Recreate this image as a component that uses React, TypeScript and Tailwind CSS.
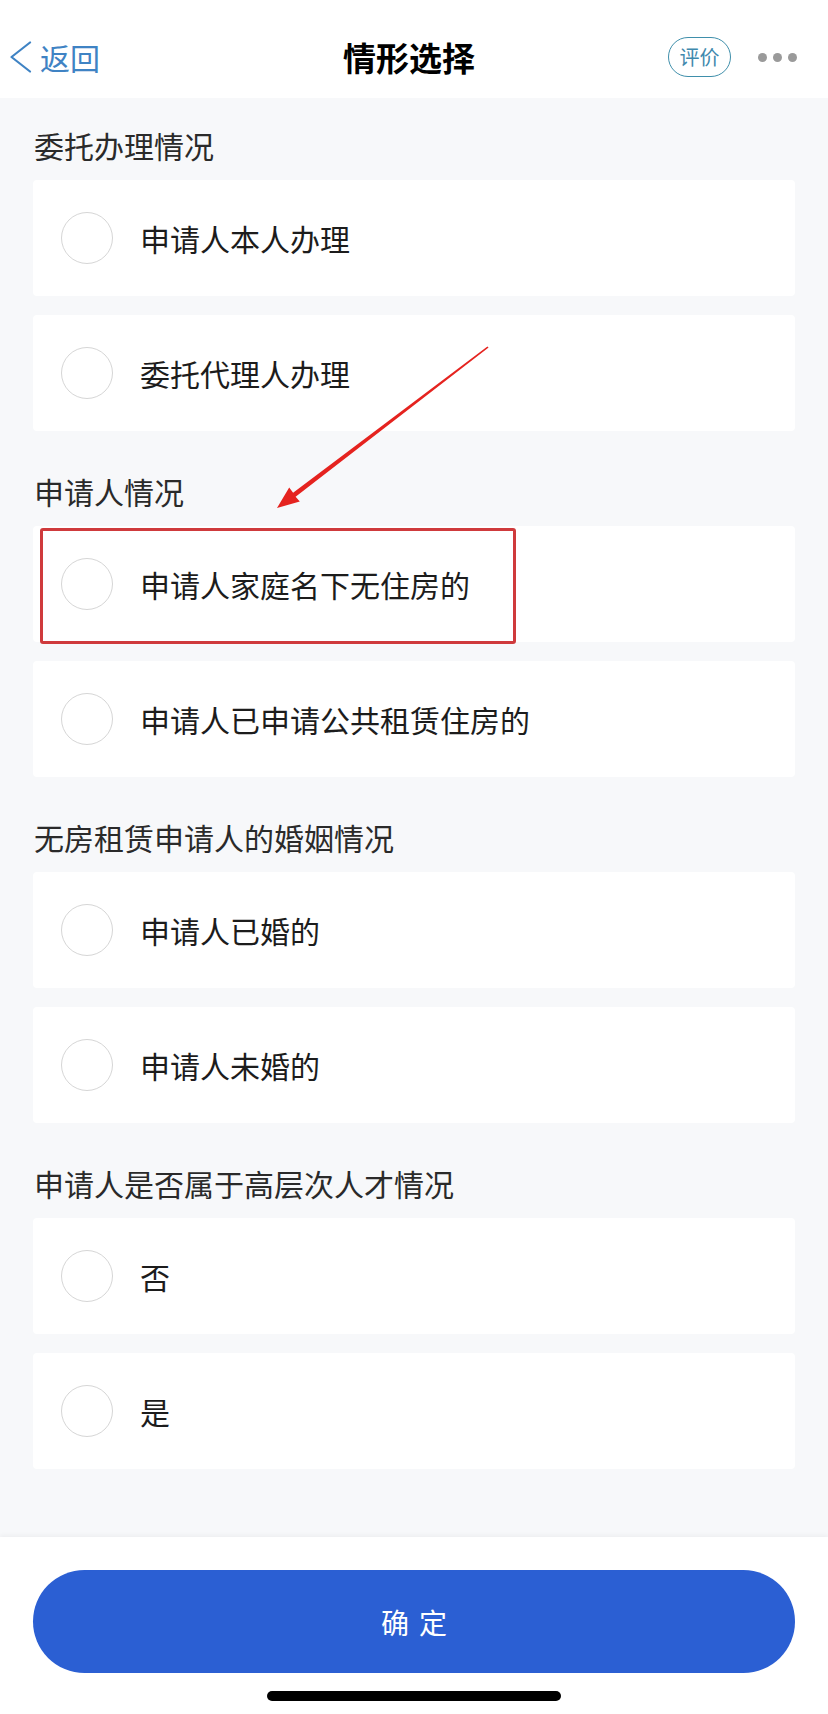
const sections = [
  { title: "委托办理情况", options: ["申请人本人办理", "委托代理人办理"] },
  { title: "申请人情况", options: ["申请人家庭名下无住房的", "申请人已申请公共租赁住房的"] },
  { title: "无房租赁申请人的婚姻情况", options: ["申请人已婚的", "申请人未婚的"] },
  { title: "申请人是否属于高层次人才情况", options: ["否", "是"] },
];

function OptionCard({ label, marked }: { label: string; marked?: boolean }) {
  return (
    <div className="relative h-[116px] bg-white rounded-[4px] flex items-center pl-[28px]">
      <div className="w-[52px] h-[52px] rounded-full border border-[#d6d6d6] bg-white shrink-0" />
      <span className="ml-[27px] text-[30px] leading-none text-[#1c1c1c]">{label}</span>
      {/* annotation box from the screenshot */}
      {marked && (
        <div className="absolute left-[7px] top-[2px] w-[476px] h-[116px] border-[3px] border-[#cf3a3c] rounded-[3px]" />
      )}
    </div>
  );
}

export default function App() {
  return (
    <div
      className="relative w-full min-h-[1714px] bg-white flex flex-col"
      style={{ fontFamily: '"Noto Sans CJK SC", "Noto Sans", sans-serif' }}
    >
      {/* Header */}
      <header className="h-[98px] bg-white flex items-center justify-between pt-[16px] pl-[10px] pr-[31px]">
        <div className="flex items-center text-[#3f83c4] w-[151px]">
          <svg width="22" height="32" viewBox="0 0 22 32" fill="none" stroke="currentColor" strokeWidth="2.2" strokeLinecap="round" strokeLinejoin="round">
            <polyline points="20,1.5 1.5,16 20,30.5" />
          </svg>
          <span className="ml-[8px] text-[30px] leading-none">返回</span>
        </div>
        <h1 className="text-[33px] font-semibold text-black leading-none">情形选择</h1>
        <div className="flex items-center w-[140px] justify-end">
          <div className="h-[40px] w-[63px] rounded-full border-[1.5px] border-[#3f8fab] flex items-center justify-center text-[20px] text-[#3f89ad] leading-none">
            评价
          </div>
          <div className="ml-[27px] flex items-center gap-[6px]">
            <span className="w-[9px] h-[9px] rounded-full bg-[#9a9a9a]" />
            <span className="w-[9px] h-[9px] rounded-full bg-[#9a9a9a]" />
            <span className="w-[9px] h-[9px] rounded-full bg-[#9a9a9a]" />
          </div>
        </div>
      </header>

      {/* Body */}
      <main className="bg-[#f7f8fa] px-[33px] pt-[27px] pb-[68px] flex flex-col gap-[40px]">
        {sections.map((s, si) => (
          <section key={s.title} className="flex flex-col">
            <h2 className="h-[40px] flex items-center text-[30px] leading-none text-[#2a2a2a] pl-[1px] mb-[15px]">
              {s.title}
            </h2>
            <div className="flex flex-col gap-[19px]">
              {s.options.map((o, oi) => (
                <OptionCard key={o} label={o} marked={si === 1 && oi === 0} />
              ))}
            </div>
          </section>
        ))}
      </main>

      {/* Footer */}
      <footer className="bg-white flex-1 flex flex-col items-center pt-[33px] shadow-[0_-2px_4px_rgba(0,0,0,0.04)]">
        <button className="w-[762px] h-[103px] rounded-full bg-[#2b5fd3] text-white text-[28px] tracking-[10px] pl-[10px] leading-none">
          确定
        </button>
        <div className="mt-[18px] w-[294px] h-[10px] rounded-full bg-black" />
      </footer>

      {/* Red annotation arrow */}
      <svg
        className="absolute left-0 top-0 w-[828px] h-[1714px] pointer-events-none"
        viewBox="0 0 828 1714"
      >
        <polygon
          points="488.6,347.6 295.6,496.8 299.8,501.6 277,508 289.2,487.6 293.1,492.8 487.4,346.4"
          fill="#e5231f"
        />
      </svg>
    </div>
  );
}
